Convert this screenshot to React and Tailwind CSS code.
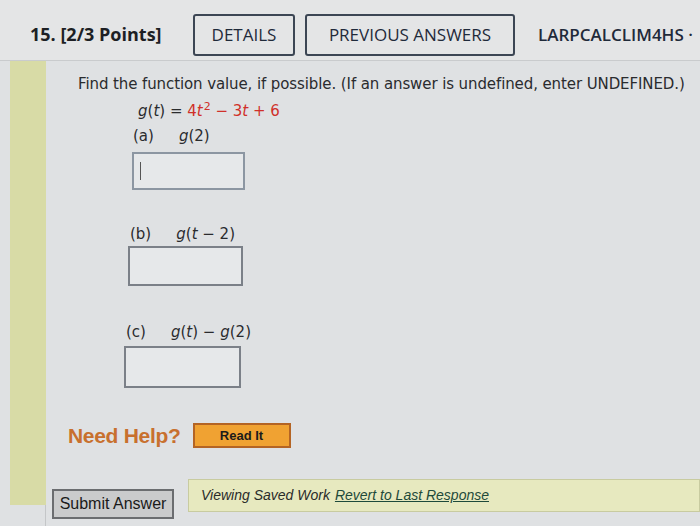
export default function App() {
  const v = { fontFamily: '"DejaVu Sans", Verdana, sans-serif' };
  const o = { fontFamily: '"Open Sans", "Liberation Sans", sans-serif' };
  const a = { fontFamily: '"Liberation Sans", Arial, sans-serif' };
  return (
    <div className="w-[700px] h-[526px] overflow-hidden bg-[#dfe1e3] flex flex-col">
      <div className="h-[61px] shrink-0 flex items-center pl-[30px] pt-[9px] bg-[#e4e5e6] border-b border-[#c9cbcd]" style={o}>
        <span className="text-[18px] font-bold text-[#1d1f24] w-[163px] whitespace-nowrap">15. [2/3 Points]</span>
        <span className="h-[42px] w-[102px] flex items-center justify-center border-2 border-[#3c4654] rounded-[3px] text-[17px] text-[#1f2a3a]">DETAILS</span>
        <span className="ml-[10px] h-[42px] w-[210px] flex items-center justify-center border-2 border-[#3c4654] rounded-[3px] text-[17px] text-[#1f2a3a]">PREVIOUS ANSWERS</span>
        <span className="ml-[23px] text-[17px] font-semibold text-[#1f2a3a] whitespace-nowrap">LARPCALCLIM4HS ·</span>
      </div>
      <div className="flex-1 flex pl-[10px]">
        <div className="w-[36px] shrink-0 flex flex-col">
          <div className="h-[444px] bg-[#d8dba6]"></div>
          <div className="flex-1 border-r border-[#c4c6c8]"></div>
        </div>
        <div className="flex-1 flex flex-col">
          <div className="pl-[32px] pt-[12px] text-[#2a2b2e]" style={v}>
            <p className="text-[15px] tracking-[-0.1px] whitespace-nowrap">Find the function value, if possible. (If an answer is undefined, enter UNDEFINED.)</p>
            <p className="mt-[4px] ml-[60px] text-[15px]"><i>g</i>(<i>t</i>) = <span className="text-[#d0302a]">4<i>t</i><sup className="text-[11px] ml-px">2</sup> − 3<i>t</i> + 6</span></p>
            <p className="mt-[3px] ml-[55px] text-[15px]">(a)<span className="ml-[25px]"><i>g</i>(2)</span></p>
            <div className="mt-[4px] ml-[54px] w-[113px] h-[38px] border-2 border-[#8c96a2] bg-[#e6e8ea] flex items-center pl-[6px]"><span className="w-px h-[18px] bg-[#555]"></span></div>
            <p className="mt-[33px] ml-[52px] text-[15px]">(b)<span className="ml-[25px]"><i>g</i>(<i>t</i> − 2)</span></p>
            <div className="mt-[1px] ml-[50px] w-[115px] h-[40px] border-2 border-[#7b8088] bg-[#e6e8ea]"></div>
            <p className="mt-[35px] ml-[48px] text-[15px]">(c)<span className="ml-[25px]"><i>g</i>(<i>t</i>) − <i>g</i>(2)</span></p>
            <div className="mt-[2px] ml-[46px] w-[117px] h-[42px] border-2 border-[#7b8088] bg-[#e6e8ea]"></div>
          </div>
          <div className="mt-[32px] pl-[22px] flex items-center" style={a}>
            <span className="text-[21px] font-bold text-[#c8702e] tracking-[-0.3px]">Need Help?</span>
            <span className="ml-[12px] w-[98px] h-[25px] flex items-center justify-center bg-[#f0a232] border-2 border-[#b46424] text-[13px] font-bold text-[#1b1b1b]">Read It</span>
          </div>
          <div className="mt-[28px] flex items-start" style={a}>
            <div className="pt-[10px] pl-[6px]">
              <span className="w-[122px] h-[30px] bg-[#cacbcc] border-2 border-[#6b6d70] text-[16px] text-[#1a1a1a] flex items-center justify-center whitespace-nowrap">Submit Answer</span>
            </div>
            <div className="ml-[14px] flex-1 h-[33px] bg-[#e7e9bf] border border-[#c8cba0] flex items-center pl-[12px] text-[14px] italic text-[#2a2b2a] whitespace-nowrap">
              Viewing Saved Work<span className="ml-[5px] underline text-[#1e4a3a]">Revert to Last Response</span>
            </div>
          </div>
        </div>
      </div>
    </div>
  );
}
